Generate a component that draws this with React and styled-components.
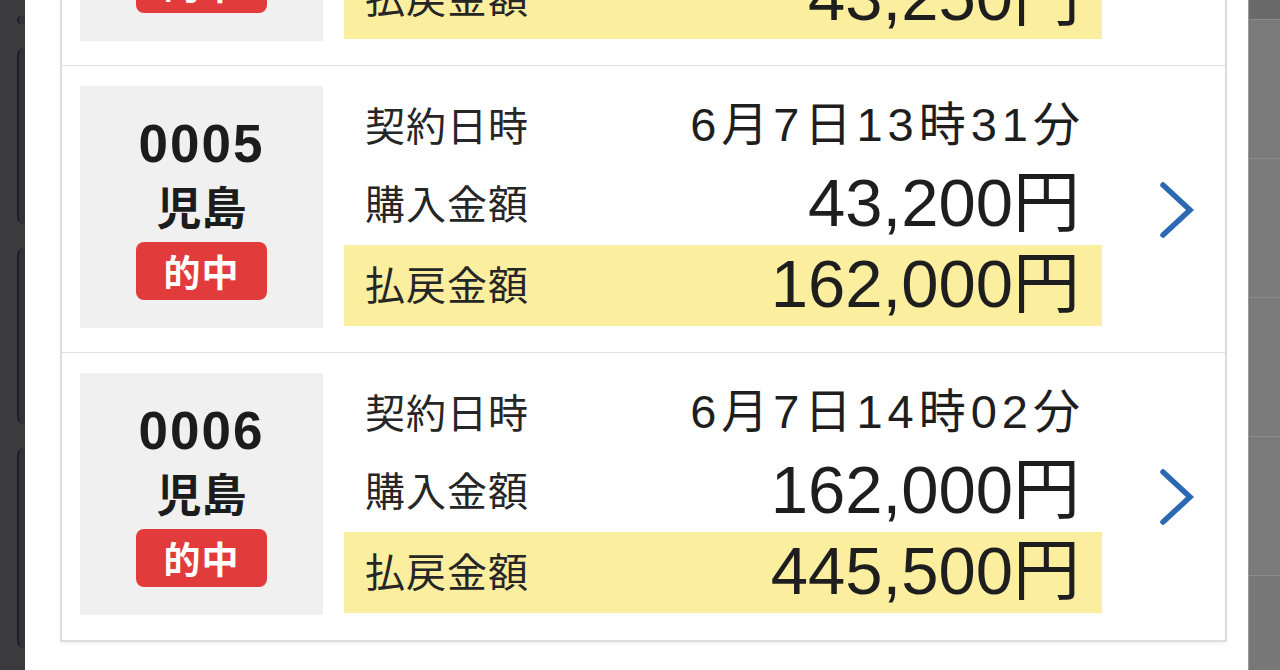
import styled, { createGlobalStyle } from "styled-components";

const GlobalStyle = createGlobalStyle`
    html, body {
        margin: 0;
        padding: 0;
        height: 670px;
        overflow: hidden;
        background: #ffffff;
    }
    * {
        box-sizing: border-box;
    }
`;

const Page = styled.div`
    display: flex;
    flex-flow: row nowrap;
    width: 1280px;
    height: 670px;
    overflow: hidden;
`;

const LeftRail = styled.div`
    flex: 0 0 25px;
    height: 100%;
    background-color: #3b3b3d;
    display: flex;
    flex-flow: column nowrap;
    align-items: flex-end;
    padding-top: 16px;
    gap: 24px;
`;

const RailTab = styled.div`
    width: 8px;
    height: ${(p) => p.$h}px;
    background-color: #33343b;
    border-left: 2px solid #1c1e2c;
    border-radius: 7px 0 0 7px;
`;

const RightRail = styled.div`
    flex: 0 0 32px;
    height: 100%;
    background-color: #787878;
    border-left: 1px solid #9a9a9a;
    display: flex;
    flex-flow: column nowrap;
`;

const RailBand = styled.div`
    height: ${(p) => p.$h}px;
    flex-shrink: 0;
    background-color: ${(p) => (p.$dark ? "#6a6a6a" : "#7a7a7a")};
    border-bottom: 1px solid #8c8c8c;
`;

const Modal = styled.div`
    flex: 1;
    height: 100%;
    background-color: #ffffff;
    padding: 0 21px 0 35px;
    overflow: hidden;
`;

const ListCard = styled.div`
    margin-top: -222px;
    border: 1px solid #dcdcdc;
    border-width: 1px 2px 2px 2px;
    background: #ffffff;
    box-shadow: 0 5px 3px -3px rgba(0, 0, 0, 0.06);
`;

const Row = styled.div`
    display: flex;
    flex-flow: row nowrap;
    align-items: center;
    padding: 20px 0 24px 18px;
    border-bottom: 1px solid #dedede;
    &:last-child {
        border-bottom: none;
        padding-bottom: 25px;
    }
`;

const IdBox = styled.div`
    flex: 0 0 243px;
    height: 242px;
    background-color: #f0f0f0;
    display: flex;
    flex-flow: column nowrap;
    align-items: center;
    justify-content: center;
    padding-top: 2px;
    font-family: "Liberation Sans", "Noto Sans CJK JP", sans-serif;
    color: #1c1c1c;
`;

const IdNumber = styled.div`
    font-size: 53px;
    font-weight: 700;
    line-height: 56px;
    letter-spacing: 2px;
`;

const Venue = styled.div`
    font-family: "Noto Sans CJK JP", sans-serif;
    font-size: 45px;
    font-weight: 700;
    line-height: 60px;
    margin-top: 4px;
`;

const HitBadge = styled.div`
    margin-top: 6px;
    width: 131px;
    height: 58px;
    border-radius: 8px;
    background-color: #e23b3b;
    color: #ffffff;
    font-family: "Noto Sans CJK JP", sans-serif;
    font-size: 37px;
    font-weight: 700;
    line-height: 1;
    display: flex;
    align-items: center;
    justify-content: center;
    letter-spacing: 1px;
`;

const Details = styled.div`
    flex: 0 0 758px;
    margin-left: 21px;
    display: flex;
    flex-flow: column nowrap;
`;

const Line = styled.div`
    height: ${(p) => p.$h}px;
    display: flex;
    flex-flow: row nowrap;
    align-items: center;
    justify-content: space-between;
    padding: 0 22px ${(p) => p.$lift}px 21px;
    background-color: ${(p) => (p.$highlight ? "#fbee9f" : "transparent")};
    color: #1e1e1e;
`;

const Label = styled.span`
    display: block;
    font-family: "Noto Sans CJK JP", sans-serif;
    font-size: 40px;
    line-height: 1;
    letter-spacing: 1px;
    color: #262626;
`;

const Value = styled.span`
    display: block;
    font-family: "Liberation Sans", "Noto Sans CJK JP", sans-serif;
    font-size: ${(p) => (p.$big ? 67 : 47)}px;
    line-height: 1;
    letter-spacing: ${(p) => (p.$big ? 0 : 5)}px;
    margin-right: ${(p) => (p.$big ? 0 : -5)}px;
    white-space: nowrap;
`;

const ArrowCell = styled.div`
    flex: 1;
    display: flex;
    align-items: center;
    padding-left: 56px;
    padding-top: 10px;
`;

const Chevron = () => (
    <svg width="40" height="62" viewBox="0 0 40 62" fill="none">
        <path
            d="M5 4 L32 29 L5 54"
            stroke="#2d69b3"
            strokeWidth="5.5"
            strokeLinecap="round"
            strokeLinejoin="miter"
        />
    </svg>
);

const tickets = [
    { id: "0004", date: "6月7日12時48分", buy: "8,650円", pay: "43,250円" },
    { id: "0005", date: "6月7日13時31分", buy: "43,200円", pay: "162,000円" },
    { id: "0006", date: "6月7日14時02分", buy: "162,000円", pay: "445,500円" },
];

const App = () => {
    return (
        <Page>
            <GlobalStyle />
            <LeftRail>
                <RailTab $h={8} />
                <RailTab $h={176} />
                <RailTab $h={176} />
                <RailTab $h={200} />
            </LeftRail>
            <Modal>
                <ListCard>
                    {tickets.map((t) => (
                        <Row key={t.id}>
                            <IdBox>
                                <IdNumber>{t.id}</IdNumber>
                                <Venue>児島</Venue>
                                <HitBadge>的中</HitBadge>
                            </IdBox>
                            <Details>
                                <Line $h={77} $lift={6}>
                                    <Label>契約日時</Label>
                                    <Value>{t.date}</Value>
                                </Line>
                                <Line $h={79} $lift={6}>
                                    <Label>購入金額</Label>
                                    <Value $big>{t.buy}</Value>
                                </Line>
                                <Line $h={81} $highlight $lift={4}>
                                    <Label>払戻金額</Label>
                                    <Value $big>{t.pay}</Value>
                                </Line>
                            </Details>
                            <ArrowCell>
                                <Chevron />
                            </ArrowCell>
                        </Row>
                    ))}
                </ListCard>
            </Modal>
            <RightRail>
                <RailBand $h={20} $dark />
                <RailBand $h={139} />
                <RailBand $h={139} />
                <RailBand $h={139} />
                <RailBand $h={139} />
            </RightRail>
        </Page>
    );
};

export default App;
